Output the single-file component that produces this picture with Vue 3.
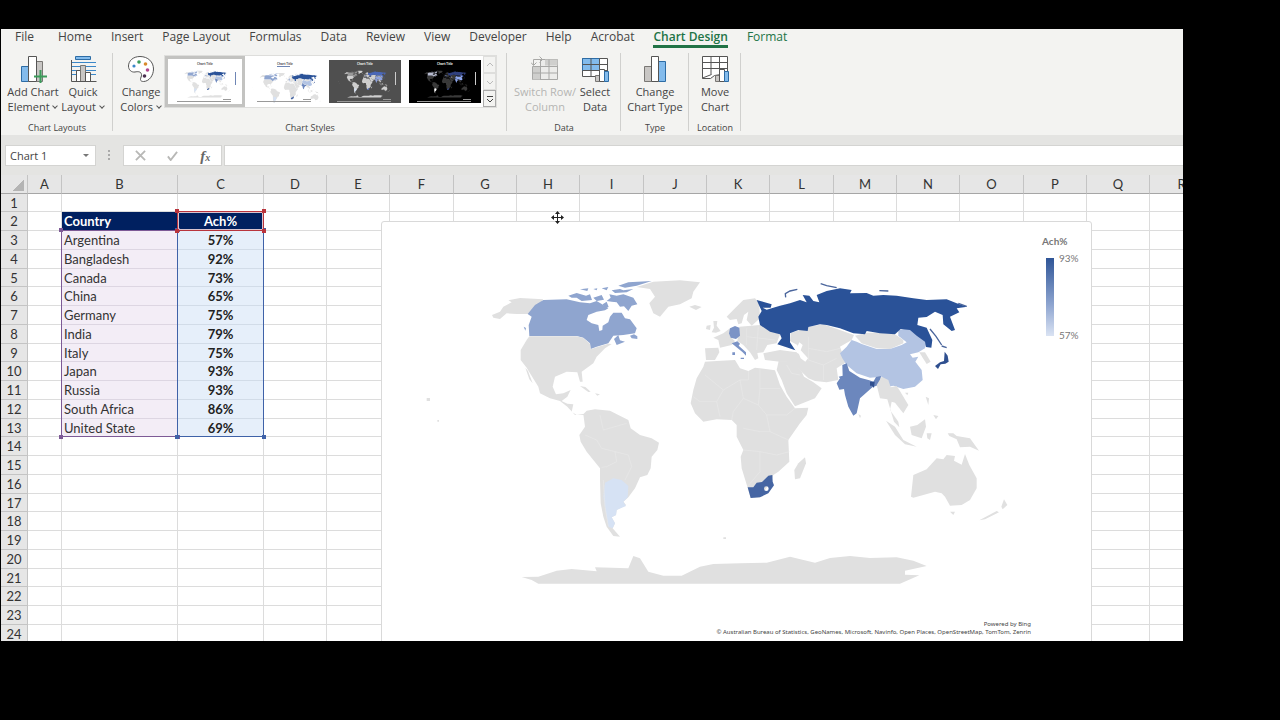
<template>
  <div class="screen">
    <div class="window">
      <nav class="tabs">
        <button
          v-for="tab in tabs"
          :key="tab"
          class="tab"
          :class="{ active: tab === activeTab, contextual: contextTabs.includes(tab) }"
          @click="activeTab = tab"
        >
          {{ tab }}
        </button>
      </nav>

      <div class="ribbon">
        <section class="group layouts">
          <div class="tools">
            <button class="tool wide">
              <svg class="icon" viewBox="0 0 28 28">
                <path d="M2.5 11.5h7v15h-7z" class="blue" />
                <path d="M17.500 6.500h6v20h-6z" class="grey" />
                <path d="M9.500 1.500h8v25h-8z" class="paper" />
                <path d="M15 21.500h13M21.500 15v13" class="plus" />
              </svg>
              <span>Add Chart</span>
              <span>Element <i class="chevron"></i></span>
            </button>
            <button class="tool quick">
              <svg class="icon" viewBox="0 0 28 28">
                <path d="M6.500 1.500h15v3h-15z" class="blue" />
                <path d="M2 7.500h25M2 11.500h25M2 15.500h25M2 19.500h25" class="lines" />
                <path d="M7.500 15.500h4v11h-4z" class="paper" />
                <path d="M11.500 10.500h5v16h-5z" class="grey" />
                <path d="M16.500 17.500h5v9h-5z" class="paper" />
                <path d="M2.500 5v21.500h25" class="line" />
              </svg>
              <span>Quick</span>
              <span>Layout <i class="chevron"></i></span>
            </button>
          </div>
          <p class="group-name">Chart Layouts</p>
        </section>

        <section class="group styles">
          <div class="tools">
            <button class="tool colors">
              <svg class="icon" viewBox="0 0 28 28">
                <path
                  d="M13 1.500C6 1.500 1.500 6 1.500 11c0 4 3 6.500 6.500 6 3-.6 6-.6 6.500 2.500.3 2-1 3-1 5 0 1.500 1.500 2 3 2 5.500 0 10-6 10-12.500C26.500 7 21 1.500 13 1.500z"
                  class="paper"
                />
                <circle cx="7" cy="11" r="1.600" fill="#3b87c8" />
                <circle cx="12" cy="7" r="1.800" fill="#3a9c5a" />
                <circle cx="18.500" cy="9" r="1.800" fill="#d98a2b" />
                <circle cx="20.500" cy="15" r="1.800" fill="#b0468f" />
                <circle cx="17.500" cy="21" r="1.800" fill="#4a3050" />
              </svg>
              <span>Change</span>
              <span>Colors <i class="chevron"></i></span>
            </button>
            <div class="gallery">
              <button
                v-for="style in chartStyles"
                :key="style"
                class="thumb"
                :class="[style, { selected: style === chartStyle }]"
                :aria-label="style"
                @click="chartStyle = style"
              >
                <svg viewBox="0 0 72 43">
                  <text x="36" y="5" text-anchor="middle">Chart Title</text>
                  <use v-if="style === 'zoomed'" href="#world" x="2" y="12" width="74" height="38" />
                  <use v-else href="#world" x="9" y="10" width="54" height="28" />
                  <path v-if="style === 'zoomed'" d="M28 6.500h13" class="mark" />
                  <path v-else d="M66.500 12v13" class="mark" />
                  <path d="M8 41.500h54M54 39.500h8" class="credit" />
                </svg>
              </button>
              <div class="scrollers">
                <button aria-label="Previous styles"><svg viewBox="0 0 8 8"><path d="M1 5l3-3 3 3" /></svg></button>
                <button aria-label="Next styles"><svg viewBox="0 0 8 8"><path d="M1 3l3 3 3-3" /></svg></button>
                <button class="more" aria-label="More styles"><svg viewBox="0 0 8 8"><path d="M1 1.500h6M1 4l3 3 3-3" /></svg></button>
              </div>
            </div>
          </div>
          <p class="group-name">Chart Styles</p>
        </section>

        <section class="group data">
          <div class="tools">
            <button class="tool wide" disabled>
              <svg class="icon" viewBox="0 0 28 28">
                <path d="M9.500 4.500h17v20h-25v-13h8z" class="off-paper" />
                <path d="M14 4.500h12.500v6H14zM2 11.500h7v13H2z" class="off-fill" />
                <path d="M2 11.500h24.500M2 18h24.500M9.500 6v18.500M18 4.500v20" class="off" />
                <path d="M2.500 10V4.500H11M8.500 1.500l3 3-3 3M0 7.500l2.500 3 3-3" class="off" />
              </svg>
              <span>Switch Row/</span>
              <span>Column</span>
            </button>
            <button class="tool select">
              <svg class="icon" viewBox="0 0 28 28">
                <path d="M1.500 3.500h25v18h-25z" class="paper" />
                <path d="M1.500 3.500h17v12h-17z" class="blue" />
                <path d="M1.500 9.500h25M1.500 15.500h25M10 3.500v18M18.500 3.500v18" class="line" />
                <path d="M14.500 20.500h4v6h-4z" class="grey" />
                <path d="M18.500 14.500h5v12h-5z" class="paper" />
                <path d="M23.500 16.500h4v10h-4z" class="blue" />
              </svg>
              <span>Select</span>
              <span>Data</span>
            </button>
          </div>
          <p class="group-name">Data</p>
        </section>

        <section class="group type">
          <div class="tools">
            <button class="tool wide">
              <svg class="icon" viewBox="0 0 28 28">
                <path d="M3.500 11.500h7v15h-7z" class="grey" />
                <path d="M17.500 6.500h7v20h-7z" class="blue" />
                <path d="M10.500 1.500h7v25h-7z" class="paper" />
              </svg>
              <span>Change</span>
              <span>Chart Type</span>
            </button>
          </div>
          <p class="group-name">Type</p>
        </section>

        <section class="group location">
          <div class="tools">
            <button class="tool move">
              <svg class="icon" viewBox="0 0 28 28">
                <path d="M1.500 1.500h25v17l-13 2-4 3h-8z" class="paper" />
                <path d="M1.500 7.500h25M1.500 13.500h25M10 1.500v18M18.500 1.500v17M1.500 23l9-3.500" class="line" />
                <path d="M14.500 20.500h4v6h-4z" class="grey" />
                <path d="M18.500 14.500h5v12h-5z" class="paper" />
                <path d="M23.500 16.500h4v10h-4z" class="blue" />
              </svg>
              <span>Move</span>
              <span>Chart</span>
            </button>
          </div>
          <p class="group-name">Location</p>
        </section>
      </div>

      <div class="formula-bar">
        <div class="name-box">
          <input v-model="nameBox" aria-label="Name box" />
          <i class="triangle"></i>
        </div>
        <i class="grip"></i>
        <div class="formula-buttons">
          <button aria-label="Cancel"><svg viewBox="0 0 12 12"><path d="M1 1l10 10M11 1L1 11" /></svg></button>
          <button aria-label="Enter"><svg viewBox="0 0 12 12"><path d="M1 7l3 4 7-9" /></svg></button>
          <button class="fx" aria-label="Insert function">f<sub>x</sub></button>
        </div>
        <input v-model="formula" class="formula" aria-label="Formula" />
      </div>

      <div class="sheet">
        <table>
          <colgroup>
            <col class="col-head" />
            <col v-for="letter in letters" :key="letter" :class="'col-' + letter" />
          </colgroup>
          <thead>
            <tr>
              <th class="corner"></th>
              <th v-for="letter in letters" :key="letter">{{ letter }}</th>
            </tr>
          </thead>
          <tbody>
            <tr v-for="n in 24" :key="n">
              <th>{{ n }}</th>
              <td v-for="letter in letters" :key="letter" :class="cellClass(letter, n)">{{ cellText(letter, n) }}</td>
            </tr>
          </tbody>
        </table>

        <!-- source ranges of the chart -->
        <div class="range categories"><i></i><i></i><i></i><i></i></div>
        <div class="range values"><i></i><i></i><i></i><i></i></div>
        <div class="range series"><i></i><i></i><i></i><i></i></div>

        <figure class="chart">
          <div class="plot">
            <svg class="map" viewBox="1260 819 1830 942">
              <defs>
                <symbol id="world" viewBox="1260 819 1830 942">
                  <g v-for="part in world" :key="part.name" :transform="`translate(${part.x} ${part.y})`">
                    <path v-for="(shape, i) in part.shapes" :key="i" :class="shape[0]" :d="shape[1]" />
                  </g>
                </symbol>
              </defs>
              <use href="#world" x="1260" y="819" width="1830" height="942" />
            </svg>
            <div class="legend">
              <strong>Ach%</strong>
              <div class="scale">
                <i class="gradient"></i>
                <div class="limits"><span>93%</span><span>57%</span></div>
              </div>
            </div>
          </div>
          <figcaption>
            <p>Powered by Bing</p>
            <p>© Australian Bureau of Statistics, GeoNames, Microsoft, Navinfo, Open Places, OpenStreetMap, TomTom, Zenrin</p>
          </figcaption>
        </figure>

        <svg class="pointer" viewBox="0 0 13 13">
          <path d="M6.500 0l2.500 3H7v3h3V4l3 2.500L10 9V7H7v3h2l-2.500 3L4 10h2V7H3v2L0 6.500 3 4v2h3V3H4z" />
        </svg>
      </div>
    </div>
  </div>
</template>

<script setup>
import { ref } from 'vue'

const tabs = [
  'File', 'Home', 'Insert', 'Page Layout', 'Formulas', 'Data', 'Review', 'View',
  'Developer', 'Help', 'Acrobat', 'Chart Design', 'Format'
]
const contextTabs = ['Chart Design', 'Format']
const activeTab = ref('Chart Design')

const chartStyles = ['light', 'zoomed', 'slate', 'black']
const chartStyle = ref('light')

const nameBox = ref('Chart 1')
const formula = ref('')

const letters = 'ABCDEFGHIJKLMNOPQR'.split('')

const countries = [
  ['Argentina', '57%'],
  ['Bangladesh', '92%'],
  ['Canada', '73%'],
  ['China', '65%'],
  ['Germany', '75%'],
  ['India', '79%'],
  ['Italy', '75%'],
  ['Japan', '93%'],
  ['Russia', '93%'],
  ['South Africa', '86%'],
  ['United State', '69%']
]

const cellText = (letter, n) => {
  if (letter !== 'B' && letter !== 'C') return ''
  if (n === 2) return letter === 'B' ? 'Country' : 'Ach%'
  const row = countries[n - 3]
  return row ? row[letter === 'B' ? 0 : 1] : ''
}

const cellClass = (letter, n) => {
  if ((letter !== 'B' && letter !== 'C') || n < 2 || n > 13) return ''
  if (n === 2) return letter === 'B' ? 'title' : 'title centered'
  return letter === 'B' ? 'country' : 'value'
}

// [class, path] per shape, painted in order
const world = [
  {
    name: 'north america', x: 1440, y: 795,
    shapes: [
      ['land', 'M36 150L60 140 70 125 95 112 85 106 120 99 190 103 150 147 110 147 80 145 60 162 40 158Z'],
      ['canada', 'M143 147L165 120 190 105 260 103 300 112 330 115 350 108 370 120 385 130 375 136 350 140 325 150 320 165 335 175 355 180 358 198 367 195 368 182 385 172 390 155 400 143 425 143 435 160 450 163 470 190 465 205 430 210 400 212 385 235 350 245 332 252 330 235 310 218 290 213 148 213 146 180 155 155Z'],
      ['canada', 'M265 92L290 84 318 92 330 88 336 105 305 108 290 98 275 98ZM340 98L365 90 372 104 350 108ZM368 118L380 110 386 126 376 130ZM388 88L410 92 430 88 460 98 472 118 455 122 445 138 432 124 420 125 410 112 395 110 380 108 392 98ZM415 62L445 52 515 48 470 62 435 68ZM300 73L325 70 322 78ZM340 72L352 70 350 76ZM365 70L385 66 380 76ZM395 76L420 72 430 76 460 72 440 82 405 84Z'],
      ['canada', 'M402 222L415 210 420 226 435 230 410 240ZM450 212L462 208 472 214 472 222 455 220ZM131 185l7 4-2 8Z'],
      ['land', 'M470 66L520 50 600 46 660 52 640 80 635 100 600 118 565 125 540 155 520 145 508 115 525 95 510 72ZM628 125L645 120 665 126 648 135Z'],
      ['land', 'M148 214L290 214 310 219 330 236 332 253 350 247 385 236 395 237 375 250 350 275 340 295 305 320 308 350 300 350 292 322 260 320 225 335 218 365 228 388 250 385 272 375 262 395 245 408 262 416 280 418 275 440 290 450 315 446 312 450 285 450 262 425 240 408 210 400 180 385 175 365 150 325 140 308 122 285 122 255 140 225ZM136 308L144 318 158 355 148 343ZM300 363L316 366 332 380 325 381ZM345 385l15 3-8 4Z']
    ]
  },
  {
    name: 'south america', x: 1680, y: 1140,
    shapes: [
      ['land', 'M70 103L80 92 105 88 150 92 175 105 205 120 212 145 240 165 275 175 297 188 292 210 275 230 272 265 262 285 240 292 225 325 205 352 190 365 198 375 170 390 168 405 155 412 165 430 158 445 180 470 160 468 140 440 130 410 122 370 120 300 120 265 100 240 80 215 62 185 58 165 75 140Z'],
      ['argentina', 'M135 308L160 295 185 300 205 318 203 352 190 365 198 378 170 390 168 405 155 412 165 430 158 445 145 440 138 400 130 350Z'],
      ['border', 'M120 105L130 150 165 140 200 130M75 165L110 180 125 205 165 215 170 245 140 260 125 262M165 215L205 225 215 260 195 300M130 300L135 380 145 440']
    ]
  },
  {
    name: 'africa and eurasia', x: 2040, y: 795,
    shapes: [
      ['land', 'M75 290L110 288 165 285 180 310 205 318 225 308 285 316 300 360 320 395 345 430 385 428 380 450 360 475 325 525 328 590 295 620 280 630 272 650 240 697 212 699 202 665 185 610 182 575 190 555 170 515 170 480 155 465 110 463 70 470 45 445 32 415 40 375 50 340 70 305Z'],
      ['border', 'M75 330L130 375 180 345 205 345 205 318M130 375L110 410 60 410 40 395M240 310L240 370 300 370M240 370L235 420 190 400 180 345M235 420L260 450 320 450 345 430M110 410L120 455M190 400L160 440 155 465M260 450L270 500 325 525M190 490L240 500 270 500M190 555L240 560 290 570 328 560M240 560L240 620 202 665'],
      ['land', 'M375 577L378 595 360 640 345 643 343 615 355 595Z'],
      ['land', 'M75 250L115 248 118 262 105 285 78 285ZM100 218L130 205 150 190 150 215 165 228 155 240 120 248 115 225ZM100 168L112 168 110 182 122 198 108 203 95 202 102 188ZM80 182L92 180 90 195 78 192Z'],
      ['land', 'M140 155L165 130 190 105 225 100 238 115 240 160 215 182 200 165 205 140 192 150 185 175 175 178 170 162 150 165Z'],
      ['land', 'M178 185L240 180 265 190 300 208 290 235 262 240 250 262 232 264 235 280 225 285 210 262 190 240 172 228ZM250 265L300 255 350 262 365 285 350 292 300 290 255 285Z'],
      ['land', 'M296 288L335 290 365 320 372 335 398 350 425 370 405 400 345 424 320 385 305 345 290 315Z'],
      ['land', 'M330 290L350 285 345 262 360 268 352 240 330 228 332 205 385 185 430 178 465 190 522 210 515 225 480 245 487 265 500 290 470 310 475 345 440 352 405 348 385 340 362 318Z'],
      ['water', 'M358 232L368 240 362 256 384 280 376 290 362 280 350 250Z'],
      ['border', 'M385 215L385 285 430 300 430 345M385 250L440 260 480 250M430 300L470 280M320 300L335 325 360 330M200 190L200 240M235 185L230 255M200 215L285 225'],
      ['land', 'M525 212L560 203 600 203 645 208 670 225 670 235 630 252 590 250 545 235Z'],
      ['china', 'M480 265L500 245 515 225 530 230 545 237 590 252 630 252 665 240 680 232 655 212 655 195 685 190 720 212 742 225 735 250 715 262 690 268 698 278 715 275 706 290 725 315 728 345 705 365 670 372 640 362 625 365 605 335 570 338 530 325 500 300 487 280Z'],
      ['land', 'M718 262L735 262 752 290 740 297 728 278Z'],
      ['india', 'M487 300L500 295 508 318 540 338 568 346 580 350 588 336 603 333 600 350 590 362 578 366 562 380 540 400 530 445 520 452 505 425 495 390 492 372 478 374 470 355 480 340 476 335 488 332Z'],
      ['deep', 'M570 350L584 350 582 369 576 362 570 362Z'],
      ['russia', 'M230 105L275 118 272 128 248 128 260 134 300 122 330 115 360 105 380 112 368 90 388 92 400 108 418 112 410 90 440 78 480 70 515 75 510 85 560 84 580 92 610 90 650 92 700 100 740 105 800 103 830 115 862 125 830 130 838 142 810 155 825 195 815 198 790 178 788 150 765 140 740 156 715 158 712 180 740 188 757 225 754 248 738 246 735 230 710 212 690 195 662 192 645 208 600 205 560 198 555 208 520 205 480 190 440 180 420 178 385 186 383 198 355 195 330 205 330 232 346 256 315 245 292 238 305 220 300 208 270 200 240 180 235 155 245 138Z'],
      ['russia-line', 'M317 97L316 86 330 78 352 73M422 56L440 62 470 68M598 77L625 78M835 115L860 124M750 192L768 214 785 240M785 243L800 248'],
      ['deep', 'M794 260L803 272 806 290 796 296 782 298 774 312 765 303 780 292 792 288Z'],
      ['germany', 'M150 190L165 183 178 188 180 212 168 222 152 218 147 205Z'],
      ['germany', 'M155 235L172 229 180 236 176 242 198 262 198 272 188 262 166 244ZM157 262h8v8h-8ZM182 278h10v4h-10Z']
    ]
  },
  {
    name: 'south africa', x: 1680, y: 1140,
    shapes: [
      ['south-africa', 'M563 322L580 322 590 308 606 306 625 287 637 285 638 305 642 316 625 340 600 352 572 354ZM612 326a7 7 0 1 0 14 0a7 7 0 1 0-14 0Z']
    ]
  },
  {
    name: 'oceania', x: 2340, y: 990,
    shapes: [
      ['land', 'M290 165L305 140 325 150 332 172 350 168 358 180 385 225 370 250 345 218 335 215 330 240 355 275 358 292 342 275 322 208 300 205Z'],
      ['land', 'M318 272L345 290 370 330 410 350 375 343 345 315ZM390 290L412 285 435 268 438 290 425 325 395 315ZM440 310l15 0-5 20-8-5ZM437 200L447 205 445 225ZM460 255L475 258 468 268ZM235 252l8 5-3 8ZM375 188h10l-3 8Z'],
      ['land', 'M503 310L520 310 530 318 570 325 597 362 570 350 540 352 530 328 508 318Z'],
      ['land', 'M393 500L400 435 440 418 470 385 490 388 500 375 525 378 522 392 545 404 555 372 568 405 590 445 590 475 570 510 545 525 510 527 495 500 485 490 465 485 430 495 400 503ZM510 545h15l-5 10ZM672 508L682 525 668 538 664 530ZM598 571L650 543 657 547 615 568Z']
    ]
  },
  {
    name: 'antarctica', x: 1500, y: 1590,
    shapes: [
      ['land', 'M65 141L115 140 170 122 215 117 290 124 285 112 385 115 400 78 420 85 445 125 490 137 545 137 600 110 640 102 720 100 800 98 870 80 945 98 990 84 1050 78 1110 84 1190 82 1240 92 1280 108 1215 122 1215 134 1258 136 1200 161 115 161 95 150Z'],
      ['land', 'M670 22h8v5h-8ZM-220-396h10v9h-10ZM-188-330h5v5h-5Z']
    ]
  }
]
</script>

<style>
body {
  background: #000;
}
</style>

<style scoped>
.screen {
  box-sizing: border-box;
  height: 100vh;
  padding: 29px 97px 79px 1px;
  font-family: "Open Sans", "Noto Sans", sans-serif;
  color: #444;
}

.window {
  height: 100%;
  display: flex;
  flex-direction: column;
  overflow: hidden;
  background: #e4e4e2;
}

button {
  font: inherit;
  color: inherit;
  background: none;
  border: none;
  padding: 0;
}

p {
  margin: 0;
}

/* Ribbon */
.tabs {
  display: flex;
  flex: none;
  height: 19px;
  padding-left: 14px;
  gap: 19px;
  background: #f3f3f1;
}

.tab {
  height: 19px;
  box-sizing: border-box;
  font-size: 12px;
  line-height: 16px;
  white-space: nowrap;
  border-bottom: 3px solid transparent;
}

.tab:first-child {
  margin-right: 5px;
}

.contextual {
  color: #217346;
}

.active {
  font-weight: 600;
  border-bottom-color: #217346;
}

.ribbon {
  display: flex;
  flex: none;
  height: 87px;
  background: #f3f3f1;
}

.group {
  display: flex;
  flex-direction: column;
  justify-content: space-between;
  background: linear-gradient(#d0d0ce, #d0d0ce) no-repeat right 5px / 1px 78px;
}

.layouts { width: 112px; }
.styles { width: 394px; }
.data { width: 114px; }
.type { width: 68px; }
.location { width: 52px; }

.group-name {
  font-size: 9px;
  line-height: 14px;
  text-align: center;
}

.tools {
  display: flex;
  justify-content: center;
  padding-top: 7px;
}

.layouts .tools {
  justify-content: flex-start;
  padding-left: 1px;
}

.styles .tools {
  justify-content: flex-start;
  padding-left: 5px;
}

.tool {
  display: flex;
  flex-direction: column;
  align-items: center;
  font-size: 11px;
  line-height: 15px;
  white-space: nowrap;
}

.tool:disabled {
  color: #b5b5b3;
}

.wide { width: 62px; }
.quick { width: 38px; }
.colors { width: 46px; }
.select { width: 38px; }
.move { width: 46px; }

.icon {
  width: 28px;
  height: 28px;
  margin-bottom: 1px;
}

.icon path {
  fill: none;
  stroke: #555;
}

.icon .blue { fill: #83bbec; stroke: #2d6ca5; }
.icon .grey { fill: #c8c6c4; stroke: #797774; }
.icon .paper { fill: #fff; }
.icon .plus { stroke: #3a9c5a; stroke-width: 2; }
.icon .lines { stroke: #3b87c8; }
.icon .off { stroke: #a8a8a6; }
.icon .off-paper { fill: #ececea; stroke: #a8a8a6; }
.icon .off-fill { fill: #cfcfcd; stroke: none; }

.chevron {
  display: inline-block;
  width: 3px;
  height: 3px;
  margin: 0 1px 3px 1px;
  border: solid #555;
  border-width: 0 1px 1px 0;
  transform: rotate(45deg);
}

.gallery {
  box-sizing: border-box;
  display: flex;
  width: 333px;
  height: 53px;
  background: #fff;
  border: 1px solid #dededc;
}

.thumb {
  box-sizing: border-box;
  width: 80px;
  height: 51px;
  padding: 4px;
}

.thumb.selected {
  padding: 1px;
  border: 3px solid #c3c3c1;
}

.thumb svg {
  display: block;
  width: 72px;
  height: 43px;
  background: #fff;
}

.thumb text {
  font-size: 3px;
  font-weight: 700;
  fill: #555;
}

.mark { stroke: #6f86b5; stroke-width: 1; }
.credit { stroke: #999; stroke-width: 1; }

.slate svg {
  --land: #d0d0d0;
  --border: #aaa;
  --canada: #9a9a9a;
  --russia: #4a67b8;
  --china: #8fa2dc;
  background: #4f4f4f;
}

.black svg {
  --land: #3a3a3a;
  --border: #222;
  --canada: #b8bcd0;
  --russia: #30407e;
  --china: #8ea6ec;
  --argentina: #fff;
  background: #000;
}

.slate text,
.black text {
  fill: #eee;
}

.slate .mark,
.black .mark {
  stroke: #ccc;
}

.scrollers {
  display: flex;
  flex-direction: column;
  flex: 1;
  margin-left: -2px;
}

.scrollers button {
  display: flex;
  align-items: center;
  justify-content: center;
  flex: 1;
  background: #f3f3f1;
  border: 1px solid #dededc;
  color: #bbb;
}

.scrollers .more {
  border-color: #aaa;
  color: #444;
}

.scrollers svg {
  width: 8px;
  height: 8px;
  fill: none;
  stroke: currentColor;
}

/* Formula bar */
.formula-bar {
  display: flex;
  flex: none;
  height: 21px;
  padding: 10px 0 9px 4px;
}

.name-box {
  box-sizing: border-box;
  display: flex;
  align-items: center;
  width: 91px;
  padding-right: 6px;
  background: #fff;
  border: 1px solid #d4d4d2;
}

.name-box input {
  flex: 1;
  min-width: 0;
  padding: 0 0 0 4px;
  font: inherit;
  font-size: 11px;
  color: #444;
  background: none;
  border: none;
}

.triangle {
  border: 3px solid transparent;
  border-top-color: #777;
  border-bottom: none;
}

.grip {
  width: 2px;
  height: 12px;
  margin: 5px 13px 0 12px;
  background: repeating-linear-gradient(#aaa 0 2px, transparent 2px 4px);
}

.formula-buttons {
  box-sizing: border-box;
  display: flex;
  align-items: center;
  justify-content: space-around;
  width: 99px;
  margin-right: 2px;
  background: #fff;
  border: 1px solid #d4d4d2;
}

.formula-buttons svg {
  display: block;
  width: 11px;
  height: 11px;
  fill: none;
  stroke: #b8b8b6;
  stroke-width: 2;
}

.fx {
  font-family: "Liberation Serif", serif;
  font-size: 15px;
  font-style: italic;
  font-weight: 700;
  line-height: 18px;
  color: #666;
}

.fx sub {
  font-size: 10px;
  line-height: 1px;
  vertical-align: baseline;
}

.formula {
  box-sizing: border-box;
  flex: 1;
  min-width: 0;
  border: 1px solid #d4d4d2;
  border-right: none;
  background: #fff;
}

/* Sheet */
.sheet {
  position: relative;
  flex: 1;
  min-height: 0;
  overflow: hidden;
  background: #fff;
  font-family: Lato, "Open Sans", sans-serif;
}

table {
  width: 1213px;
  table-layout: fixed;
  border-collapse: separate;
  border-spacing: 0;
  font-size: 13px;
  color: #333;
}

col { width: 63px; }
.col-head { width: 27px; }
.col-A { width: 34px; }
.col-B { width: 116px; }
.col-C { width: 86px; }
.col-F, .col-I, .col-L, .col-O, .col-R { width: 64px; }

th,
td {
  box-sizing: border-box;
  height: 19px;
  padding: 1px 0 0;
  line-height: 17px;
  white-space: nowrap;
  border-right: 1px solid #dcdcdc;
  border-bottom: 1px solid #dcdcdc;
}

tbody tr:nth-child(4n + 1) > * {
  height: 18px;
  line-height: 16px;
}

th {
  font-weight: 400;
  background: #e6e6e6;
  border-color: #c4c4c4;
}

thead th {
  border-bottom-color: #a6a6a6;
}

.corner {
  background: linear-gradient(135deg, transparent 50%, #b4b4b4 50%) no-repeat 11px 4px / 12px 12px #e6e6e6;
}

td.title {
  padding-left: 2px;
  font-weight: 700;
  color: #fff;
  background: #002060;
  border-color: #002060;
}

td.centered {
  padding-left: 0;
  text-align: center;
}

td.country {
  padding-left: 2px;
  background: #f3edf6;
  border-color: #ddd6e2;
}

td.value {
  font-weight: 700;
  text-align: center;
  color: #222;
  background: #e6effa;
  border-color: #d2dce8;
}

.range {
  position: absolute;
  box-sizing: border-box;
  border: 1px solid;
}

.range i {
  position: absolute;
  width: 4px;
  height: 4px;
  background: currentColor;
}

.range i:nth-child(1) { top: -3px; left: -3px; }
.range i:nth-child(2) { top: -3px; right: -3px; }
.range i:nth-child(3) { bottom: -3px; left: -3px; }
.range i:nth-child(4) { bottom: -3px; right: -3px; }

.categories {
  top: 55px;
  left: 60px;
  width: 117px;
  height: 207px;
  color: #7d5a96;
}

.values {
  top: 55px;
  left: 176px;
  width: 87px;
  height: 207px;
  color: #3f62a8;
}

.series {
  top: 36px;
  left: 176px;
  width: 87px;
  height: 20px;
  color: #b9343c;
  box-shadow: inset 0 0 0 1px #d8c4d0;
}

/* Chart */
.chart {
  position: absolute;
  top: 46px;
  left: 380px;
  box-sizing: border-box;
  width: 711px;
  height: 440px;
  margin: 0;
  background: #fff;
  border: 1px solid #d9d9d9;
  border-radius: 3px;
}

.plot {
  display: flex;
  gap: 12px;
  padding-left: 38px;
}

.map {
  width: 610px;
  height: 314px;
  margin-top: 51px;
}

.land { fill: var(--land, #e0e0e0); }
.water { fill: #fff; }
.border { fill: none; stroke: var(--border, #e9e9e9); stroke-width: 2; }
.canada { fill: var(--canada, #8fa5cf); }
.argentina { fill: var(--argentina, #d6e2f4); }
.china { fill: var(--china, #b3c4e3); }
.india { fill: var(--china, #6c87bd); }
.germany { fill: var(--china, #7b93c6); }
.russia { fill: var(--russia, #2a5298); }
.russia-line { fill: none; stroke: var(--russia, #4a659c); stroke-width: 4; }
.deep { fill: var(--russia, #2f4f8f); }
.south-africa { fill: var(--russia, #4565a3); fill-rule: evenodd; }

.legend {
  padding-top: 12px;
  font-size: 10px;
  line-height: 14px;
  color: #777;
}

.legend strong {
  display: block;
}

.scale {
  display: flex;
  gap: 5px;
  padding-left: 4px;
}

.gradient {
  width: 8px;
  height: 78px;
  margin-top: 10px;
  background: linear-gradient(#2f5597, #8ea5d0 60%, #dae3f3);
}

.limits {
  display: flex;
  flex-direction: column;
  justify-content: space-between;
  height: 91px;
  padding-top: 3px;
}

figcaption {
  padding-right: 60px;
  margin-top: 33px;
  font-family: "Noto Sans", "Open Sans", sans-serif;
  font-size: 6px;
  line-height: 8px;
  text-align: right;
  color: #444;
}

.pointer {
  position: absolute;
  top: 36px;
  left: 550px;
  width: 13px;
  height: 13px;
  fill: #222;
}
</style>
